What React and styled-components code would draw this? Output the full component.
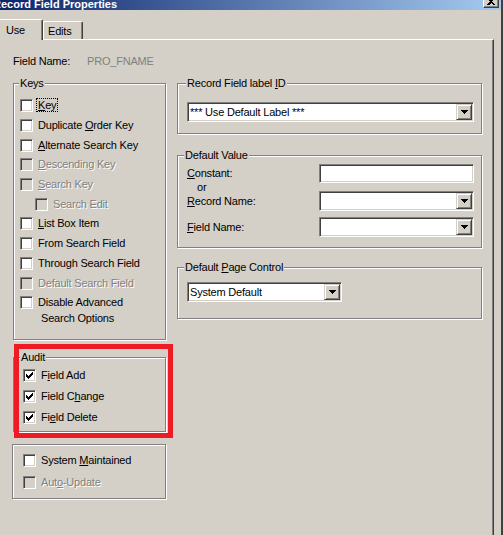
import React from 'react';
import styled, { createGlobalStyle } from 'styled-components';

const GlobalStyle = createGlobalStyle`
    html, body {
        margin: 0;
        padding: 0;
        background: #d4d0c8;
    }
    body {
        font-family: "Liberation Sans", Arial, sans-serif;
        font-size: 11px;
        letter-spacing: -0.2px;
        color: #000;
    }
    * {
        box-sizing: border-box;
    }
`;

const CheckMark = () => (
    <svg width="7" height="7" viewBox="0 0 7 7" shapeRendering="crispEdges">
        <rect x="6" y="0" width="1" height="1" fill="#000" />
        <rect x="5" y="1" width="2" height="1" fill="#000" />
        <rect x="0" y="2" width="1" height="1" fill="#000" />
        <rect x="4" y="2" width="3" height="1" fill="#000" />
        <rect x="0" y="3" width="2" height="1" fill="#000" />
        <rect x="3" y="3" width="3" height="1" fill="#000" />
        <rect x="0" y="4" width="5" height="1" fill="#000" />
        <rect x="1" y="5" width="3" height="1" fill="#000" />
        <rect x="2" y="6" width="1" height="1" fill="#000" />
    </svg>
);

const DownArrow = () => (
    <svg width="7" height="4" viewBox="0 0 7 4" shapeRendering="crispEdges">
        <path d="M0 0H7V1H6V2H5V3H4V4H3V3H2V2H1V1H0Z" fill="#000" />
    </svg>
);

const CloseGlyph = () => (
    <svg width="8" height="7" viewBox="0 0 8 7" shapeRendering="crispEdges">
        <path d="M0 0H2L4 2L6 0H8L5 3.5L8 7H6L4 5L2 7H0L3 3.5Z" fill="#000" />
    </svg>
);

const CheckBox = ({ checked, disabled, label, indent = 0, h = 19.7, gap = 5, multi }) => (
    <CheckRow $indent={indent} $h={h} $multi={multi}>
        <Box $disabled={disabled}>{checked && <CheckMark />}</Box>
        <CheckLabel $disabled={disabled} $gap={gap} $multi={multi}>
            {label}
        </CheckLabel>
    </CheckRow>
);

const Combo = ({ text, width }) => (
    <ComboBox $width={width}>
        <ComboText>{text}</ComboText>
        <DropButton>
            <DownArrow />
        </DropButton>
    </ComboBox>
);

const App = () => {
    return (
        <>
            <GlobalStyle />
            <Window>
                <TitleBar>
                    <TitleText>Record Field Properties</TitleText>
                    <CloseButton>
                        <CloseGlyph />
                    </CloseButton>
                </TitleBar>

                <Dialog>
                    <TabStrip>
                        <Tab $active>Use</Tab>
                        <Tab>Edits</Tab>
                    </TabStrip>

                    <Panel>
                        <FieldNameRow>
                            <FieldNameLabel>Field Name:</FieldNameLabel>
                            <FieldNameValue>PRO_FNAME</FieldNameValue>
                        </FieldNameRow>

                        <Columns>
                            <LeftColumn>
                                <GroupBox $height={257} $pad="12px 0 0 6px">
                                    <Caption $x={7}>Keys</Caption>
                                    <CheckBox label={<Focus><u>K</u>ey</Focus>} />
                                    <CheckBox label={<>Duplicate <u>O</u>rder Key</>} />
                                    <CheckBox label={<><u>A</u>lternate Search Key</>} />
                                    <CheckBox disabled label={<><u>D</u>escending Key</>} />
                                    <CheckBox disabled label={<><u>S</u>earch Key</>} />
                                    <CheckBox disabled indent={15} label="Search Edit" />
                                    <CheckBox label={<><u>L</u>ist Box Item</>} />
                                    <CheckBox label="From Search Field" />
                                    <CheckBox label="Through Search Field" />
                                    <CheckBox disabled label="Default Search Field" />
                                    <CheckBox
                                        multi
                                        h={36}
                                        label={
                                            <>
                                                <LabelLine>Disable Advanced</LabelLine>
                                                <LabelLine $shift={3}>Search Options</LabelLine>
                                            </>
                                        }
                                    />
                                </GroupBox>

                                <AuditWrap>
                                    <GroupBox $height={75} $pad="7px 0 0 9px">
                                        <Caption $x={8}>Audit</Caption>
                                        <CheckBox checked h={21} label={<>F<u>i</u>eld Add</>} />
                                        <CheckBox checked h={21} label={<>Field C<u>h</u>ange</>} />
                                        <CheckBox checked h={21} label={<>Fi<u>e</u>ld Delete</>} />
                                    </GroupBox>
                                    <RedFrame />
                                </AuditWrap>

                                <GroupBox $height={55} $width={154} $pad="4px 0 0 10px" $shift={-1} $top={12}>
                                    <CheckBox h={22} label={<>System <u>M</u>aintained</>} />
                                    <CheckBox disabled h={22} label={<>Aut<u>o</u>-Update</>} />
                                </GroupBox>
                            </LeftColumn>

                            <RightColumn>
                                <GroupBox $height={51} $pad="18px 7px 0 9px">
                                    <Caption $x={10}>Record Field label <u>I</u>D</Caption>
                                    <Combo text="*** Use Default Label ***" />
                                </GroupBox>

                                <GroupBox $height={93} $pad="8px 7px 0 9px" $top={21}>
                                    <Caption $x={8}>Default Value</Caption>
                                    <ValueGrid>
                                        <GridLabel><u>C</u>onstant:</GridLabel>
                                        <TextBox />
                                        <OrLabel>or</OrLabel>
                                        <Spacer />
                                        <GridLabel><u>R</u>ecord Name:</GridLabel>
                                        <Combo />
                                        <Spacer />
                                        <Spacer />
                                        <GridLabel><u>F</u>ield Name:</GridLabel>
                                        <Combo />
                                    </ValueGrid>
                                </GroupBox>

                                <GroupBox $height={52} $pad="14px 0 0 9px" $top={19}>
                                    <Caption $x={8}>Default <u>P</u>age Control</Caption>
                                    <Combo text="System Default" width={155} />
                                </GroupBox>
                            </RightColumn>
                        </Columns>
                    </Panel>
                </Dialog>
            </Window>
        </>
    );
};

// ===============================
// window frame
// ===============================
const Window = styled.div`
    width: 503px;
    height: 535px;
    overflow: hidden;
    background: #d4d0c8;
    border-right: 2px solid #404040;
    display: flex;
    flex-direction: column;
`;

const TitleBar = styled.div`
    height: 10px;
    flex-shrink: 0;
    overflow: hidden;
    display: flex;
    justify-content: space-between;
    background: linear-gradient(to right, #0a246a, #a6caf0);
`;

const TitleText = styled.span`
    margin: -2px 0 0 -7px;
    line-height: 13px;
    color: #fff;
    font-weight: bold;
    letter-spacing: 0;
    white-space: nowrap;
`;

const CloseButton = styled.div`
    width: 16px;
    height: 14px;
    margin: -6px 2px 0 0;
    flex-shrink: 0;
    display: flex;
    align-items: center;
    justify-content: center;
    background: #d4d0c8;
    border: 1px solid;
    border-color: #fff #404040 #404040 #fff;
    box-shadow: inset -1px -1px 0 #808080;
`;

// ===============================
// tabs
// ===============================
const Dialog = styled.div`
    flex: 1;
    display: flex;
    flex-direction: column;
    padding-top: 9px;
    margin-left: -2px;
    width: 496px;
`;

const TabStrip = styled.div`
    height: 20px;
    display: flex;
    align-items: flex-end;
`;

const Tab = styled.div`
    position: relative;
    z-index: 1;
    width: ${(p) => (p.$active ? '45px' : '40px')};
    height: ${(p) => (p.$active ? '21px' : '18px')};
    margin-bottom: ${(p) => (p.$active ? '-1px' : '0')};
    padding: ${(p) => (p.$active ? '4px 0 0 7px' : '3px 0 0 4px')};
    line-height: 13px;
    background: #d4d0c8;
    border-top: 1px solid #fff;
    border-left: 1px solid #fff;
    border-right: 1px solid #404040;
    border-radius: 2px 2px 0 0;
    box-shadow: inset -1px 0 0 #808080;
`;

const Panel = styled.div`
    flex: 1;
    padding: 15px 0 0 14px;
    border-top: 1px solid #fff;
    border-left: 1px solid #fff;
    border-right: 1px solid #404040;
    box-shadow: inset -1px 0 0 #808080;
`;

const FieldNameRow = styled.div`
    display: flex;
    line-height: 13px;
`;

const FieldNameLabel = styled.span`
    width: 74px;
`;

const FieldNameValue = styled.span`
    color: #808080;
`;

const Columns = styled.div`
    display: flex;
    gap: 11px;
    margin-top: 15px;
`;

const LeftColumn = styled.div`
    width: 153px;
    display: flex;
    flex-direction: column;
`;

const RightColumn = styled.div`
    width: 305px;
    display: flex;
    flex-direction: column;
`;

// ===============================
// group boxes
// ===============================
const GroupBox = styled.div`
    position: relative;
    width: ${(p) => (p.$width ? `${p.$width}px` : '100%')};
    height: ${(p) => p.$height}px;
    margin-top: ${(p) => p.$top || 0}px;
    margin-left: ${(p) => p.$shift || 0}px;
    padding: ${(p) => p.$pad};
    border: 1px solid #808080;
    box-shadow: inset 1px 1px 0 #fff, 1px 1px 0 #fff;
`;

const Caption = styled.span`
    position: absolute;
    top: -7px;
    left: ${(p) => p.$x - 2}px;
    padding: 0 1px;
    line-height: 13px;
    background: #d4d0c8;
    white-space: nowrap;
`;

const AuditWrap = styled.div`
    position: relative;
    margin-top: 17px;
`;

const RedFrame = styled.div`
    position: absolute;
    top: -13px;
    left: 1px;
    width: 159px;
    height: 94px;
    border: 5px solid #ed1c24;
    pointer-events: none;
`;

// ===============================
// check boxes
// ===============================
const CheckRow = styled.div`
    display: flex;
    align-items: ${(p) => (p.$multi ? 'flex-start' : 'center')};
    height: ${(p) => p.$h}px;
    padding-left: ${(p) => p.$indent}px;
    padding-top: ${(p) => (p.$multi ? '3px' : '0')};
`;

const Box = styled.span`
    width: 13px;
    height: 13px;
    flex-shrink: 0;
    display: flex;
    align-items: center;
    justify-content: center;
    background: ${(p) => (p.$disabled ? '#d4d0c8' : '#fff')};
    border: 1px solid;
    border-color: #808080 #fff #fff #808080;
    box-shadow: inset 1px 1px 0 #404040, inset -1px -1px 0 #d4d0c8;
`;

const CheckLabel = styled.span`
    margin-left: ${(p) => p.$gap}px;
    margin-top: ${(p) => (p.$multi ? '-1.5px' : '0')};
    line-height: ${(p) => (p.$multi ? '16px' : '13px')};
    white-space: nowrap;
    color: ${(p) => (p.$disabled ? '#808080' : '#000')};
    text-shadow: ${(p) => (p.$disabled ? '1px 1px 0 #fff' : 'none')};
`;

const LabelLine = styled.span`
    display: block;
    padding-left: ${(p) => p.$shift || 0}px;
`;

const Focus = styled.span`
    margin-left: -2px;
    padding: 0 1px;
    border: 1px dotted #000;
`;

// ===============================
// inputs
// ===============================
const sunken = `
    border: 1px solid;
    border-color: #808080 #fff #fff #808080;
    box-shadow: inset 1px 1px 0 #404040, inset -1px -1px 0 #d4d0c8;
    background: #fff;
`;

const ComboBox = styled.div`
    ${sunken}
    width: ${(p) => (p.$width ? `${p.$width}px` : '100%')};
    height: 20px;
    padding: 1px;
    display: flex;
    align-items: stretch;
`;

const ComboText = styled.span`
    flex: 1;
    padding-left: 1px;
    line-height: 16px;
    white-space: nowrap;
    overflow: hidden;
`;

const DropButton = styled.span`
    width: 16px;
    display: flex;
    align-items: center;
    justify-content: center;
    background: #d4d0c8;
    border: 1px solid;
    border-color: #d4d0c8 #404040 #404040 #d4d0c8;
    box-shadow: inset 1px 1px 0 #fff, inset -1px -1px 0 #808080;
`;

const TextBox = styled.div`
    ${sunken}
    height: 19px;
`;

const ValueGrid = styled.div`
    display: grid;
    grid-template-columns: 132px 1fr;
    grid-template-rows: 19px 8px 20px 6px 20px;
`;

const GridLabel = styled.span`
    align-self: center;
    line-height: 13px;
    white-space: nowrap;
`;

const OrLabel = styled.span`
    padding-left: 10px;
    line-height: 8px;
`;

const Spacer = styled.span``;

export default App;
